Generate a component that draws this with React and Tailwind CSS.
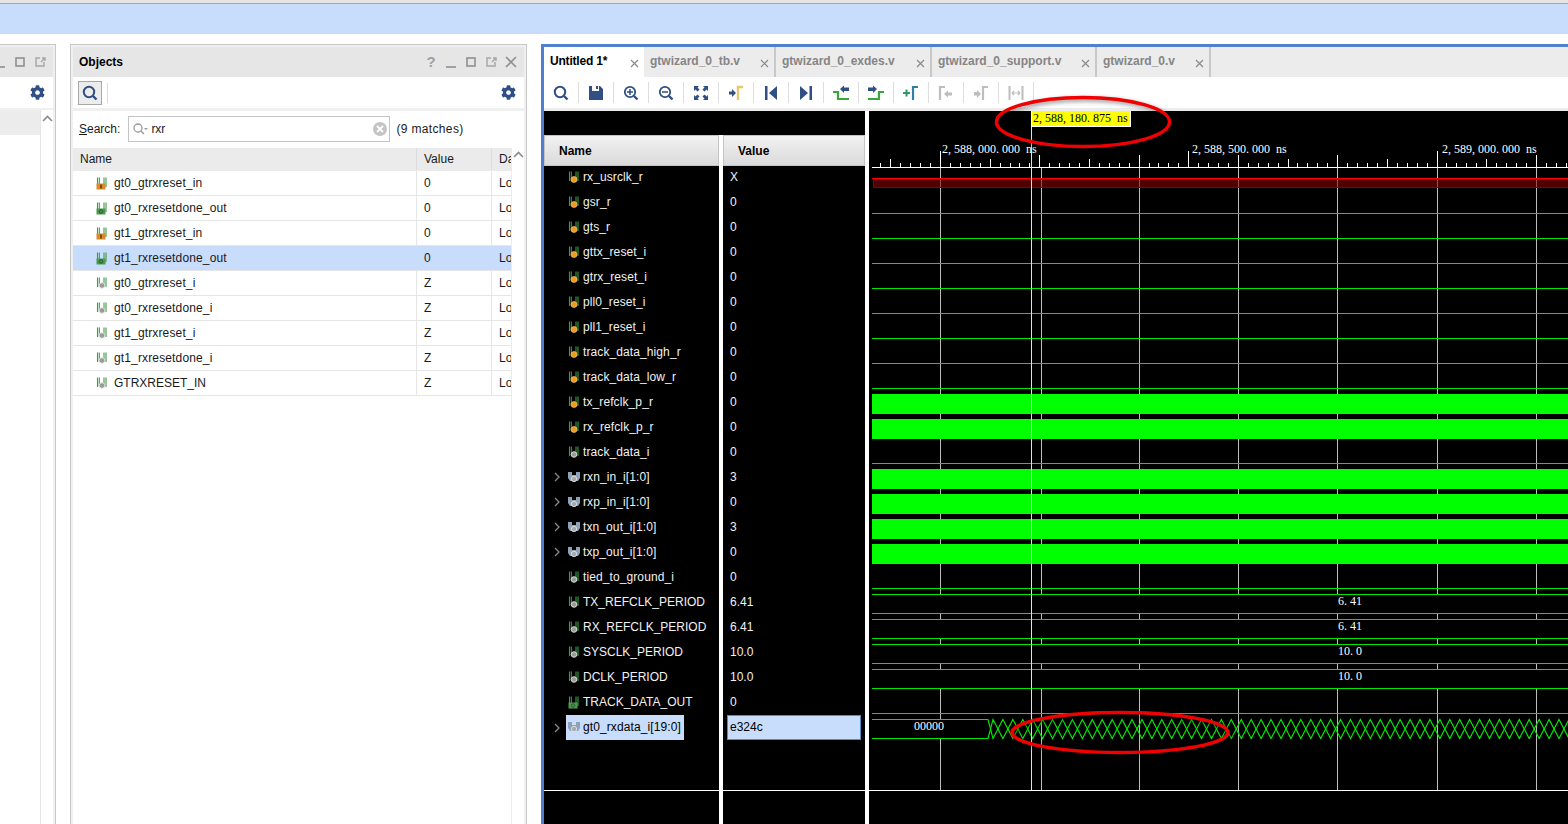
import { FaCog } from 'react-icons/fa';

const navy = '#2f4f85';

const objectRows = [
  ['gt0_gtrxreset_in', '0', 'in'],
  ['gt0_rxresetdone_out', '0', 'out'],
  ['gt1_gtrxreset_in', '0', 'in'],
  ['gt1_rxresetdone_out', '0', 'out', true],
  ['gt0_gtrxreset_i', 'Z', 'wire'],
  ['gt0_rxresetdone_i', 'Z', 'wire'],
  ['gt1_gtrxreset_i', 'Z', 'wire'],
  ['gt1_rxresetdone_i', 'Z', 'wire'],
  ['GTRXRESET_IN', 'Z', 'wire'],
];

const signals = [
  ['rx_usrclk_r', 'X', 'reg'],
  ['gsr_r', '0', 'reg'],
  ['gts_r', '0', 'reg'],
  ['gttx_reset_i', '0', 'reg'],
  ['gtrx_reset_i', '0', 'reg'],
  ['pll0_reset_i', '0', 'reg'],
  ['pll1_reset_i', '0', 'reg'],
  ['track_data_high_r', '0', 'reg'],
  ['track_data_low_r', '0', 'reg'],
  ['tx_refclk_p_r', '0', 'reg'],
  ['rx_refclk_p_r', '0', 'reg'],
  ['track_data_i', '0', 'wire'],
  ['rxn_in_i[1:0]', '3', 'bus'],
  ['rxp_in_i[1:0]', '0', 'bus'],
  ['txn_out_i[1:0]', '3', 'bus'],
  ['txp_out_i[1:0]', '0', 'bus'],
  ['tied_to_ground_i', '0', 'wire'],
  ['TX_REFCLK_PERIOD', '6.41', 'wire'],
  ['RX_REFCLK_PERIOD', '6.41', 'wire'],
  ['SYSCLK_PERIOD', '10.0', 'wire'],
  ['DCLK_PERIOD', '10.0', 'wire'],
  ['TRACK_DATA_OUT', '0', 'out'],
];

const tabs = [
  ['gtwizard_0_tb.v', 'w-[132px]'],
  ['gtwizard_0_exdes.v', 'w-[156px]'],
  ['gtwizard_0_support.v', 'w-[165px]'],
  ['gtwizard_0.v', 'w-[114px]'],
];

const gridLines = [940, 1041, 1139, 1238, 1337, 1437, 1536];
const lowRows = [213, 238, 263, 288, 313, 338, 363, 388, 463, 588, 713];
const clockBars = [394, 419, 469, 494, 519, 544];
const busRows = [
  [594, '6.41'],
  [619, '6.41'],
  [644, '10.0'],
  [669, '10.0'],
];

function SignalIcon({ type }) {
  if (type === 'bus') {
    return (
      <svg width="14" height="14" viewBox="0 0 14 14" className="shrink-0">
        <path d="M1 2h4v3h4V2h4v6l-2 3H3L1 8z" fill="#8da2b8" />
        <circle cx="7" cy="9" r="2.700" fill="#a8a8a8" stroke="#e8e8e8" strokeWidth="0.8" />
      </svg>
    );
  }
  return (
    <svg width="14" height="14" viewBox="0 0 14 14" className="shrink-0">
      <path d="M2.500 11V1.500M4.300 1.500v8.500H9V1.500M11 1.500V11" stroke="#3f9a45" strokeWidth="1.1" fill="none" />
      {type === 'in' && (
        <>
          <rect x="1.500" y="7.500" width="9" height="6" fill="#d98a2b" />
          <path d="M6 8.500v4" stroke="#6b3b0a" strokeWidth="1.6" />
        </>
      )}
      {type === 'out' && (
        <>
          <rect x="1.500" y="7.500" width="9" height="6" fill="#4b9a4f" />
          <circle cx="6" cy="10.500" r="1.700" fill="none" stroke="#1f5a25" strokeWidth="1" />
        </>
      )}
      {type === 'reg' && <circle cx="7" cy="9.500" r="3" fill="#f09a1e" stroke="#f8d68a" strokeWidth="0.6" />}
      {type === 'wire' && <circle cx="7" cy="9.500" r="2.800" fill="#9a9a9a" stroke="#e4e4e4" strokeWidth="0.9" />}
    </svg>
  );
}

function WindowButtons({ help, close }) {
  return (
    <div className="flex shrink-0 items-center">
      {help && <span className="w-[20px] text-center text-[15px] font-bold text-[#a0a0a0]">?</span>}
      <svg width="20" height="14" viewBox="0 0 20 14" className="shrink-0">
        <path d="M5 12h10" stroke="#a0a0a0" strokeWidth="2" />
      </svg>
      <svg width="20" height="14" viewBox="0 0 20 14" className="shrink-0">
        <rect x="6" y="3" width="8" height="8" fill="none" stroke="#909090" strokeWidth="1.6" />
      </svg>
      <svg width="20" height="14" viewBox="0 0 20 14" className="shrink-0">
        <path d="M10 3H6v8h8V7M11 7l4-4M12 3h3v3" fill="none" stroke="#a8a8a8" strokeWidth="1.5" />
      </svg>
      {close && (
        <svg width="20" height="14" viewBox="0 0 20 14" className="shrink-0">
          <path d="M5 2l10 10M15 2L5 12" stroke="#909090" strokeWidth="1.6" />
        </svg>
      )}
    </div>
  );
}

function TabClose() {
  return (
    <svg width="9" height="9" viewBox="0 0 9 9" className="absolute bottom-[9px] right-[5px]">
      <path d="M1 1l7 7M8 1L1 8" stroke="#8a8a8a" strokeWidth="1.2" />
    </svg>
  );
}

function ToolIcon({ name }) {
  const dim = '#bdbdbd';
  const shapes = {
    search: (
      <>
        <circle cx="8" cy="8" r="5.200" fill="none" stroke={navy} strokeWidth="2" />
        <path d="M12 12l3.500 3.500" stroke={navy} strokeWidth="2.400" />
      </>
    ),
    save: <path d="M2 2h3v5h7V2h1l3 3v11H2zM9 2h2v3H9z" fill={navy} />,
    zoomIn: (
      <>
        <circle cx="8" cy="8" r="5.200" fill="none" stroke={navy} strokeWidth="1.800" />
        <path d="M12 12l3.500 3.500" stroke={navy} strokeWidth="2.400" />
        <path d="M5 8h6M8 5v6" stroke={navy} strokeWidth="1.500" />
      </>
    ),
    zoomOut: (
      <>
        <circle cx="8" cy="8" r="5.200" fill="none" stroke={navy} strokeWidth="1.800" />
        <path d="M12 12l3.500 3.500" stroke={navy} strokeWidth="2.400" />
        <path d="M5 8h6" stroke={navy} strokeWidth="1.500" />
      </>
    ),
    fit: (
      <path
        d="M2 2h5L5.500 3.500l2 2-2 2-2-2L2 7zM16 2v5l-1.500-1.500-2 2-2-2 2-2L11 2zM2 16v-5l1.500 1.500 2-2 2 2-2 2L7 16zM16 16h-5l1.500-1.500-2-2 2-2 2 2L16 11z"
        fill={navy}
      />
    ),
    toCursor: (
      <>
        <path d="M2 7.500h3V5l4 4-4 4v-2.500H2z" fill={navy} />
        <path d="M11 16V3h5" fill="none" stroke="#e6c86e" strokeWidth="2.400" />
      </>
    ),
    first: <path d="M3 2h2.500v14H3zM15 2v14L7 9z" fill={navy} />,
    last: <path d="M15 2h-2.500v14H15zM3 2v14l8-7z" fill={navy} />,
    prevEdge: (
      <>
        <path d="M1 8h5v7h11" fill="none" stroke="#35a83a" strokeWidth="2.200" />
        <path d="M8 5l4-3.500V3.500h5V7h-5v2z" fill={navy} />
      </>
    ),
    nextEdge: (
      <>
        <path d="M1 15h11V8h5" fill="none" stroke="#35a83a" strokeWidth="2.200" />
        <path d="M10 5L6 1.500V3.500H1V7h5v2z" fill={navy} />
      </>
    ),
    addMarker: (
      <>
        <path d="M1 9h7M4.500 5.500v7" stroke="#2f9a62" strokeWidth="2" />
        <path d="M11 16V3h5" fill="none" stroke="#2f7fa8" strokeWidth="2.200" />
      </>
    ),
    prevMarker: (
      <>
        <path d="M3 16V3h5" fill="none" stroke={dim} strokeWidth="2.200" />
        <path d="M7 10l4-3.500V8.500h4v3h-4v2z" fill={dim} />
      </>
    ),
    nextMarker: (
      <>
        <path d="M2 8h3V6l4 4-4 4v-2.500H2z" fill={dim} />
        <path d="M11 16V3h5" fill="none" stroke={dim} strokeWidth="2.200" />
      </>
    ),
    delta: (
      <>
        <path d="M2.500 2v14M15.500 2v14" stroke={dim} strokeWidth="2" />
        <path d="M5 9h8M5 9l2-2M5 9l2 2M13 9l-2-2M13 9l-2 2" stroke={dim} strokeWidth="1.200" fill="none" />
      </>
    ),
  };
  return (
    <svg width="18" height="18" viewBox="0 0 18 18">
      {shapes[name]}
    </svg>
  );
}

const toolbar = [
  'search', 'save', 'zoomIn', 'zoomOut', 'fit', 'toCursor', 'first',
  'last', 'prevEdge', 'nextEdge', 'addMarker', 'prevMarker', 'nextMarker', 'delta',
];

function Chevron() {
  return (
    <svg width="11" height="8" viewBox="0 0 11 8">
      <path d="M1 6l4.500-4.500L10 6" fill="none" stroke="#8a8a8a" strokeWidth="1.600" />
    </svg>
  );
}

function LeftStub() {
  return (
    <div className="flex h-full w-[56px] flex-col border-r border-t border-[#c8c8c8] bg-[#f0f0f0] pr-[2px] pt-[2px]">
      <div className="flex h-[30px] items-center justify-end overflow-hidden bg-[#e6e6e6] pr-[3px]">
        <WindowButtons />
      </div>
      <div className="flex h-[31px] items-center justify-end bg-white pr-[8px]">
        <FaCog size={15} color={navy} />
      </div>
      <div className="mt-[2px] flex flex-1 bg-white">
        <div className="flex-1">
          <div className="h-[25px] bg-[#ececec]" />
        </div>
        <div className="flex w-[13px] justify-center border-l border-[#e4e4e4] pt-[5px]">
          <Chevron />
        </div>
      </div>
    </div>
  );
}

function ObjectsPanel() {
  return (
    <div className="flex h-full w-[457px] flex-col border-x border-t border-[#c8c8c8] bg-[#f0f0f0] px-[2px] pt-[2px] text-[12px] text-[#1a1a1a]">
      <div className="flex h-[30px] items-center justify-between bg-[#e6e6e6] pl-[6px] pr-[3px]">
        <span className="font-bold text-black">Objects</span>
        <WindowButtons help close />
      </div>
      <div className="flex h-[31px] items-center bg-white pl-[5px] pr-[8px]">
        <div className="flex h-[24px] w-[24px] items-center justify-center border border-[#a8a8a8] bg-[#ececec]">
          <ToolIcon name="search" />
        </div>
        <div className="ml-[5px] h-[20px] w-px bg-[#dcdcdc]" />
        <div className="flex-1" />
        <FaCog size={15} color={navy} />
      </div>
      <div className="mt-[3px] flex h-[37px] items-center bg-white pb-[1px] pl-[6px]">
        <span>
          <span className="underline">S</span>earch:
        </span>
        <div className="ml-[8px] flex h-[26px] w-[262px] items-center border border-[#c4c4c4] pl-[3px] pr-[2px]">
          <svg width="16" height="14" viewBox="0 0 16 14">
            <circle cx="6" cy="6" r="4" fill="none" stroke="#9a9a9a" strokeWidth="1.300" />
            <path d="M9 9l3 3" stroke="#9a9a9a" strokeWidth="1.500" />
            <path d="M12 6h4l-2 2z" fill="#9a9a9a" />
          </svg>
          <span className="ml-[3px] flex-1">rxr</span>
          <svg width="14" height="14" viewBox="0 0 14 14">
            <circle cx="7" cy="7" r="7" fill="#c4c4c4" />
            <path d="M4 4l6 6M10 4l-6 6" stroke="#fff" strokeWidth="1.800" />
          </svg>
        </div>
        <span className="ml-[6px] tracking-[0.35px]">(9 matches)</span>
      </div>
      <div className="flex flex-1 bg-white">
        <div className="w-[438px] overflow-hidden">
          <div className="flex h-[23px] items-center bg-[#ebebeb] pb-[1px]">
            <div className="flex h-full w-[344px] items-center border-r border-[#dcdcdc] pl-[7px]">Name</div>
            <div className="flex h-full w-[75px] items-center border-r border-[#dcdcdc] pl-[7px]">Value</div>
            <div className="flex h-full w-[19px] items-center overflow-hidden whitespace-nowrap pl-[7px]">Data</div>
          </div>
          {objectRows.map(([name, value, type, selected]) => (
            <div
              key={name}
              className={`flex h-[25px] items-center border-b ${
                selected ? 'border-[#e6e6e6] bg-[#c8dcfb]' : 'border-[#e6e6e6]'
              }`}
            >
              <div className={`flex h-full w-[344px] items-center gap-[5px] pl-[22px] ${selected ? '' : 'border-r border-[#e6e6e6]'}`}>
                <SignalIcon type={type} />
                <span className={name === name.toUpperCase() ? '' : 'tracking-[0.14px]'}>{name}</span>
              </div>
              <div className={`flex h-full w-[75px] items-center pl-[7px] ${selected ? '' : 'border-r border-[#e6e6e6]'}`}>
                {value}
              </div>
              <div className="flex h-full w-[19px] items-center overflow-hidden whitespace-nowrap pl-[7px]">Logic</div>
            </div>
          ))}
        </div>
        <div className="flex w-[13px] justify-center border-l border-[#ececec] pt-[3px]">
          <Chevron />
        </div>
      </div>
    </div>
  );
}

function BusArrow() {
  return (
    <svg width="9" height="12" viewBox="0 0 9 12" className="shrink-0">
      <path d="M2 2l4 4-4 4" fill="none" stroke="#8a8a8a" strokeWidth="1.300" />
    </svg>
  );
}

function ColumnHeader({ label }) {
  return (
    <div className="relative z-10 -mb-px flex h-[31px] items-center border border-[#c4c4c4] bg-gradient-to-b from-[#f2f2f2] to-[#dadada] pl-[14px] text-[12px] font-bold text-black">
      {label}
    </div>
  );
}

function ColumnFoot() {
  return (
    <div className="flex flex-1 flex-col bg-black">
      <div className="h-[50px]" />
      <div className="h-px bg-white" />
    </div>
  );
}

function NameColumn() {
  return (
    <div className="flex w-[175px] flex-col">
      <ColumnHeader label="Name" />
      {signals.map(([name, , type]) => (
        <div key={name} className="flex h-[25px] items-center bg-black pb-[2px] pl-[9px] text-[12px] text-[#f2f2f2]">
          <span className="flex w-[14px] shrink-0">{type === 'bus' && <BusArrow />}</span>
          <SignalIcon type={type} />
          <span className={`ml-[2px] ${name === name.toUpperCase() ? '' : 'tracking-[0.1px]'}`}>{name}</span>
        </div>
      ))}
      <div className="flex h-[25px] items-center bg-black pl-[9px] text-[12px] text-black">
        <span className="mr-[4px] flex shrink-0">
          <BusArrow />
        </span>
        <div className="flex h-[25px] w-[118px] items-center bg-[#c8dcfb] pb-[2px] pl-px">
          <SignalIcon type="bus" />
          <span className="ml-[2px] tracking-[0.1px]">gt0_rxdata_i[19:0]</span>
        </div>
      </div>
      <ColumnFoot />
    </div>
  );
}

function ValueColumn() {
  return (
    <div className="flex w-[142px] flex-col">
      <ColumnHeader label="Value" />
      {signals.map(([name, value]) => (
        <div key={name} className="flex h-[25px] items-center bg-black pb-[2px] pl-[7px] text-[12px] text-[#f2f2f2]">
          {value}
        </div>
      ))}
      <div className="flex h-[25px] items-center bg-black px-[4px]">
        <div className="flex h-[25px] w-full items-center border border-[#4f8fc8] bg-[#c8dcfb] pb-[2px] pl-[2px] text-[12px] text-black">
          e324c
        </div>
      </div>
      <ColumnFoot />
    </div>
  );
}

// the simulator's font is a 6px fixed cell, so every glyph gets its own x
function CellText({ x, y, fill = '#fff', children }) {
  const xs = [...children].map((_, i) => x + i * 6).join(' ');
  return (
    <text x={xs} y={y} fill={fill} style={{ fontFamily: '"Liberation Serif", serif', fontSize: 12 }}>
      {children}
    </text>
  );
}

function Waveform() {
  const ticks = [];
  for (let k = -6; k < 64; k++) {
    const x = Math.round(940 + k * 9.93);
    let top = 163;
    if (k % 25 === 0) top = 151;
    else if (k % 10 === 0) top = 155;
    else if (k % 5 === 0) top = 159;
    ticks.push(`M${x + 0.5} ${top}V167`);
  }

  let upper = 'M988 719.500';
  let lower = 'M988 738.500';
  let up = false;
  for (let x = 993; x < 1575; x += 9.93) {
    upper += `L${x.toFixed(1)} ${up ? 719.5 : 738.5}`;
    lower += `L${x.toFixed(1)} ${up ? 738.5 : 719.5}`;
    up = !up;
  }

  return (
    <svg viewBox="869 111 699 713" className="h-[713px] w-[699px] bg-black">
      <g shapeRendering="crispEdges">
        <path d={`M872 167.500H1568${ticks.join('')}`} stroke="#fff" fill="none" />
        {gridLines.map((x) => (
          <rect key={x} x={x} y="168" width="1" height="622" fill="#bdbdbd" />
        ))}
        <rect x="873.500" y="179.500" width="696" height="8" fill="#8a0000" fillOpacity="0.58" stroke="#8a0000" />
        <rect x="872" y="178" width="696" height="1" fill="#ff0000" />
        {lowRows.map((y) => (
          <rect key={y} x="872" y={y} width="696" height="1" fill="#00e600" />
        ))}
        {clockBars.map((y) => (
          <rect key={y} x="872" y={y} width="696" height="20" fill="#00ff00" />
        ))}
        {busRows.map(([y]) => (
          <g key={y}>
            <rect x="872" y={y} width="696" height="20" fill="#000" />
            <rect x="872" y={y} width="696" height="1" fill="#00e600" />
            <rect x="872" y={y + 19} width="696" height="1" fill="#00e600" />
          </g>
        ))}
        <rect x="872" y="719" width="116" height="20" fill="#000" />
        <path d="M872 719.500H988M872 738.500H988" stroke="#00e600" fill="none" />
      </g>
      <path d={upper} stroke="#00ee00" strokeWidth="1.100" fill="none" />
      <path d={lower} stroke="#00ee00" strokeWidth="1.100" fill="none" />
      {busRows.map(([y, label]) => (
        <CellText key={y} x={1338} y={y + 11}>
          {label}
        </CellText>
      ))}
      <CellText x={914} y={730}>00000</CellText>
      <CellText x={942} y={153}>2,588,000.000 ns</CellText>
      <CellText x={1192} y={153}>2,588,500.000 ns</CellText>
      <CellText x={1442} y={153}>2,589,000.000 ns</CellText>
      <g shapeRendering="crispEdges">
        <rect x="1031" y="126" width="1" height="664" fill="#ffff00" />
        <rect x="1031" y="111" width="100" height="16" fill="#fff" />
        <rect x="1032" y="111" width="98" height="15" fill="#ffff00" />
      </g>
      <CellText x={1033} y={122} fill="#000">2,588,180.875 ns</CellText>
      <rect x="869" y="790" width="699" height="1" fill="#fff" shapeRendering="crispEdges" />
    </svg>
  );
}

function WaveWindow() {
  return (
    <div className="flex h-full flex-1 flex-col border-l-[3px] border-t-[3px] border-[#4f81d0]">
      <div className="flex h-[30px] items-stretch bg-[#ececec] text-[12px]">
        <div className="relative flex w-[100px] items-center bg-white pb-[2px] pl-[6px] font-bold tracking-[-0.2px] text-black">
          Untitled 1*
          <TabClose />
        </div>
        {tabs.map(([name, width]) => (
          <div key={name} className={`relative flex items-center border-r-2 border-[#c8c8c8] pb-[2px] pl-[6px] font-bold text-[#858585] ${width}`}>
            {name}
            <TabClose />
          </div>
        ))}
      </div>
      <div className="flex h-[31px] items-center bg-white">
        {toolbar.map((name) => (
          <div key={name} className="flex h-[21px] w-[35px] items-center justify-center border-r border-[#dedede]">
            <ToolIcon name={name} />
          </div>
        ))}
      </div>
      <div className="h-[3px] bg-[#ececec]" />
      <div className="flex flex-1 overflow-hidden bg-white">
        <div className="flex w-[321px] flex-col">
          <div className="h-[24px] shrink-0 bg-black" />
          <div className="flex flex-1 gap-[4px]">
            <NameColumn />
            <ValueColumn />
          </div>
        </div>
        <div className="ml-[4px]">
          <Waveform />
        </div>
      </div>
    </div>
  );
}

export default function App() {
  return (
    <div className="relative flex h-[824px] w-[1568px] flex-col overflow-hidden bg-white font-['Liberation_Sans',sans-serif] text-[12px]">
      <div className="h-[4px] border-b border-[#a8a8a8] bg-[#e4e4e4]" />
      <div className="h-[30px] bg-[#c8dcfb]" />
      <div className="flex flex-1 pt-[10px]">
        <LeftStub />
        <div className="ml-[14px] h-full">
          <ObjectsPanel />
        </div>
        <div className="ml-[14px] h-full flex-1">
          <WaveWindow />
        </div>
      </div>
      {/* annotation rings drawn over the capture */}
      <svg className="pointer-events-none absolute inset-0 drop-shadow-[2px_2px_2px_rgba(0,0,0,0.45)]" width="1568" height="824">
        <ellipse cx="1083" cy="122" rx="86.500" ry="24.500" fill="none" stroke="#f00000" strokeWidth="3.500" />
        <ellipse cx="1120" cy="732.500" rx="108" ry="20" fill="none" stroke="#f00000" strokeWidth="3.500" />
      </svg>
    </div>
  );
}
